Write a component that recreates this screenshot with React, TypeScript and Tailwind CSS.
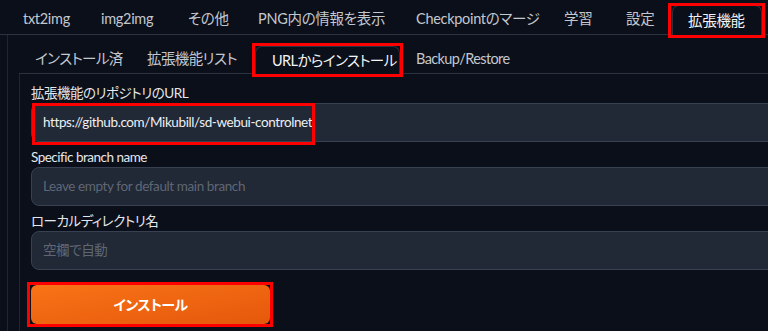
import React from "react";

const font = {
  fontFamily: 'Lato, "Noto Sans CJK JP", sans-serif',
};

function TopTab({ label, w, active }: { label: string; w: string; active?: boolean }) {
  return active ? (
    <div className={`relative -mb-px flex h-[30px] shrink-0 items-center whitespace-nowrap rounded-t-[7px] border border-b-0 border-[#2b3240] bg-[#0b0f19] pl-[15px] text-[14.5px] tracking-[-0.3px] text-[#f3f4f6] ${w}`}>
      {label}
    </div>
  ) : (
    <div className={`flex h-[30px] shrink-0 items-center whitespace-nowrap pl-4 text-[14.5px] tracking-[-0.3px] text-[#c3c7ce] ${w}`}>{label}</div>
  );
}

function InnerTab({ label, w, active }: { label: string; w: string; active?: boolean }) {
  return active ? (
    <div className={`relative -mb-px flex h-[28px] shrink-0 items-center whitespace-nowrap rounded-t-[7px] border border-b-0 border-[#2b3240] bg-[#0b0f19] pl-[16px] text-[14.5px] tracking-[-0.6px] text-[#f3f4f6] ${w}`}>
      {label}
    </div>
  ) : (
    <div className={`flex h-[28px] shrink-0 items-center whitespace-nowrap pl-4 text-[14.5px] tracking-[-0.6px] text-[#c3c7ce] ${w}`}>{label}</div>
  );
}

function Field({ label, value, placeholder }: { label: string; value?: string; placeholder?: string }) {
  return (
    <div className="flex flex-col">
      <div className="h-[18px] whitespace-nowrap text-[13.5px] leading-[18px] tracking-[-0.5px] text-[#e5e7eb]">{label}</div>
      <div className="mt-px flex h-[39px] items-center rounded-[8px] border border-[#374151] bg-[#212836] px-[11px] text-[13.5px] tracking-[-0.4px]">
        {value ? (
          <span className="text-[#eef0f3]">{value}</span>
        ) : (
          <span className="text-[#5f6775]">{placeholder}</span>
        )}
      </div>
    </div>
  );
}

export default function App() {
  return (
    <div
      className="relative h-[331px] w-[768px] overflow-hidden bg-[#0b0f19] [font-feature-settings:'palt']"
      style={font}
    >
      <div className="w-[830px]">
        {/* top tabs */}
        <div className="flex h-[35px] items-end border-b border-[#2b3240] pl-[7px]">
          <TopTab label="txt2img" w="w-[78px]" />
          <TopTab label="img2img" w="w-[87px]" />
          <TopTab label="その他" w="w-[70px]" />
          <TopTab label="PNG内の情報を表示" w="w-[158px]" />
          <TopTab label="Checkpointのマージ" w="w-[148px]" />
          <TopTab label="学習" w="w-[62px]" />
          <TopTab label="設定" w="w-[62px]" />
          <TopTab label="拡張機能" w="w-[90px]" active />
        </div>
        {/* outer panel */}
        <div className="ml-[7px] h-[300px] border-l border-[#1f2531] pt-[11px] pl-[11px]">
          <div className="flex h-[28px] items-end border-b border-[#2b3240]">
            <InnerTab label="インストール済" w="w-[112px]" />
            <InnerTab label="拡張機能リスト" w="w-[124px]" />
            <InnerTab label="URLからインストール" w="w-[145px]" active />
            <InnerTab label="Backup/Restore" w="w-[131px]" />
          </div>
          <div className="h-[280px] border-l border-[#1f2531] pt-[10px] pl-[11px]">
            <div className="flex flex-col gap-[6px]">
              <Field label="拡張機能のリポジトリのURL" value="https://github.com/Mikubill/sd-webui-controlnet" />
              <Field label="Specific branch name" placeholder="Leave empty for default main branch" />
              <Field label="ローカルディレクトリ名" placeholder="空欄で自動" />
            </div>
            <button className="mt-[15px] flex h-[39px] w-[239px] items-center justify-center rounded-[6px] bg-gradient-to-br from-[#f97316] to-[#e5580c] text-[14px] font-bold tracking-[-0.5px] text-white">
              インストール
            </button>
          </div>
        </div>
      </div>

      {/* annotation boxes */}
      <div className="pointer-events-none absolute left-[668px] top-[3px] h-[35px] w-[97px] border-[3px] border-[#ff0000]" />
      <div className="pointer-events-none absolute left-[252px] top-[43px] h-[34px] w-[151px] border-[3px] border-[#ff0000]" />
      <div className="pointer-events-none absolute left-[32px] top-[103px] h-[42px] w-[283px] border-[3px] border-[#ff0000]" />
      <div className="pointer-events-none absolute left-[27px] top-[282px] h-[45px] w-[246px] border-[3px] border-[#ff0000]" />
    </div>
  );
}
